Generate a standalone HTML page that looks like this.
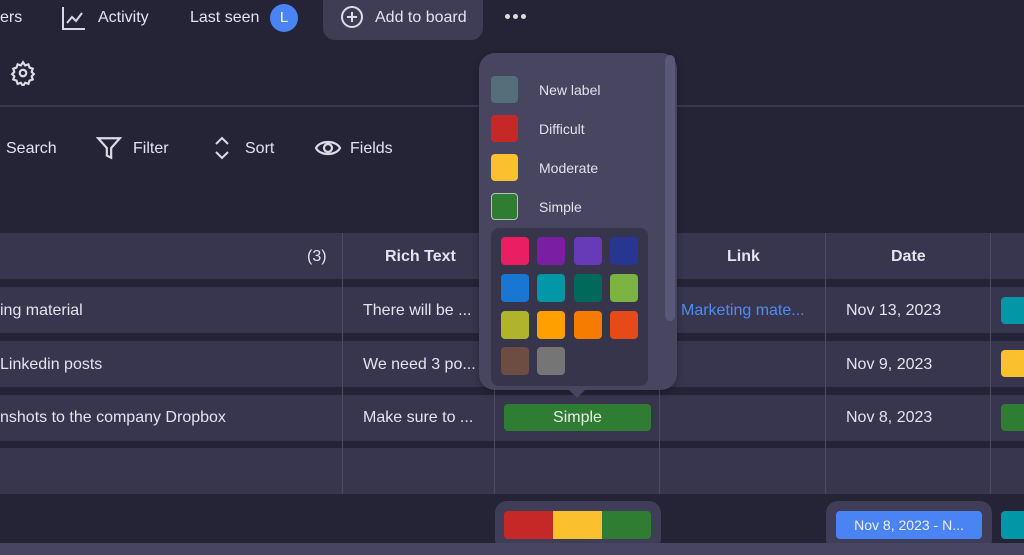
<!DOCTYPE html>
<html><head><style>
*{margin:0;padding:0;box-sizing:border-box}
body{width:1024px;height:555px;overflow:hidden;background:#252437;font-family:"Liberation Sans",sans-serif;color:#e4e3ee;position:relative}
.a{position:absolute}
.t{font-size:16px;color:#e4e3ee;white-space:nowrap}
.row{position:absolute;left:0;width:1024px;background:#38364f}
.vl{position:absolute;width:1px;background:#4c4a66}
.sq{position:absolute;width:28px;height:28px;border-radius:4px}
.ls{position:absolute;left:12px;width:27px;height:27px;border-radius:4px}
.ll{position:absolute;left:60px;font-size:14px;color:#e2e1ec}
.dot{position:absolute;top:14px;width:5px;height:5px;border-radius:50%;background:#ddd}
</style></head><body>
<!-- top bar -->
<div class="a t" style="left:0;top:9px">ers</div>
<svg class="a" style="left:61px;top:5px" width="26" height="26" viewBox="0 0 26 26" fill="none" stroke="#d8d7e4" stroke-width="2"><path d="M2 2v22h22"/><path d="M6 18l5-6 4 4 6-8"/></svg>
<div class="a t" style="left:98px;top:9px">Activity</div>
<div class="a t" style="left:190px;top:9px">Last seen</div>
<div class="a" style="left:270px;top:4px;width:28px;height:28px;border-radius:50%;background:#4a84f4;color:#fff;font-size:15px;text-align:center;line-height:28px">L</div>
<div class="a" style="left:323px;top:-10px;width:160px;height:50px;border-radius:12px;background:#3f3d56"></div>
<svg class="a" style="left:340px;top:5px" width="24" height="24" viewBox="0 0 24 24" fill="none" stroke="#dddce8" stroke-width="2"><circle cx="12" cy="12" r="10"/><path d="M12 7v10M7 12h10"/></svg>
<div class="a t" style="left:375px;top:9px">Add to board</div>
<div class="dot" style="left:505px"></div><div class="dot" style="left:513px"></div><div class="dot" style="left:521px"></div>
<svg class="a" style="left:10px;top:60px" width="26" height="26" viewBox="0 0 24 24" fill="none" stroke="#dcdbe6" stroke-width="2"><circle cx="12" cy="12" r="3"/><path d="M12 2l2 3 3-1 1 3 3 1-1 3 2 2-2 2 1 3-3 1-1 3-3-1-2 3-2-3-3 1-1-3-3-1 1-3-2-2 2-2-1-3 3-1 1-3 3 1z"/></svg>
<div class="a" style="left:0;top:105px;width:1024px;height:2px;background:#3a3850"></div>
<!-- toolbar -->
<div class="a t" style="left:6px;top:140px">Search</div>
<svg class="a" style="left:96px;top:135px" width="26" height="26" viewBox="0 0 24 24" fill="none" stroke="#dcdbe6" stroke-width="2"><path d="M2 3h20l-8 9v9l-4-2v-7z"/></svg>
<div class="a t" style="left:133px;top:140px">Filter</div>
<svg class="a" style="left:211px;top:136px" width="22" height="24" viewBox="0 0 22 24" fill="none" stroke="#dcdbe6" stroke-width="2"><path d="M5 8l6-6 6 6M5 16l6 6 6-6"/></svg>
<div class="a t" style="left:245px;top:140px">Sort</div>
<svg class="a" style="left:314px;top:135px" width="28" height="26" viewBox="0 0 28 26" fill="none" stroke="#dcdbe6" stroke-width="2.2"><path d="M2 13C6 5 22 5 26 13C22 21 6 21 2 13z"/><circle cx="14" cy="13" r="4"/></svg>
<div class="a t" style="left:350px;top:140px">Fields</div>
<!-- table -->
<div class="row" style="top:233px;height:46px"></div>
<div class="row" style="top:287px;height:46px"></div>
<div class="row" style="top:341px;height:46px"></div>
<div class="row" style="top:395px;height:46px"></div>
<div class="row" style="top:448px;height:46px"></div>
<div class="vl" style="left:342px;top:233px;height:261px"></div>
<div class="vl" style="left:494px;top:233px;height:261px"></div>
<div class="vl" style="left:659px;top:233px;height:261px"></div>
<div class="vl" style="left:825px;top:233px;height:261px"></div>
<div class="vl" style="left:990px;top:233px;height:261px"></div>
<div class="a t" style="left:307px;top:248px">(3)</div>
<div class="a t" style="left:385px;top:248px;font-weight:bold">Rich Text</div>
<div class="a t" style="left:727px;top:248px;font-weight:bold">Link</div>
<div class="a t" style="left:891px;top:248px;font-weight:bold">Date</div>
<div class="a t" style="left:0;top:302px">ing material</div>
<div class="a t" style="left:0;top:356px">Linkedin posts</div>
<div class="a t" style="left:0;top:409px">nshots to the company Dropbox</div>
<div class="a t" style="left:363px;top:302px">There will be ...</div>
<div class="a t" style="left:363px;top:356px">We need 3 po...</div>
<div class="a t" style="left:363px;top:409px">Make sure to ...</div>
<div class="a t" style="left:681px;top:302px;color:#4f8cf0">Marketing mate...</div>
<div class="a t" style="left:846px;top:302px">Nov 13, 2023</div>
<div class="a t" style="left:846px;top:356px">Nov 9, 2023</div>
<div class="a t" style="left:846px;top:409px">Nov 8, 2023</div>
<div class="a" style="left:1001px;top:297px;width:30px;height:27px;border-radius:4px;background:#0097a7"></div>
<div class="a" style="left:1001px;top:350px;width:30px;height:27px;border-radius:4px;background:#fbc02d"></div>
<div class="a" style="left:1001px;top:404px;width:30px;height:27px;border-radius:4px;background:#2e7d32"></div>
<div class="a" style="left:504px;top:404px;width:147px;height:27px;border-radius:4px;background:#2e7d32;color:#e8f0e8;font-size:16px;text-align:center;line-height:27px">Simple</div>
<!-- footer -->
<div class="a" style="left:495px;top:501px;width:166px;height:50px;border-radius:12px;background:#3f3d58"></div>
<div class="a" style="left:504px;top:511px;width:147px;height:28px;border-radius:4px;overflow:hidden;display:flex"><div style="flex:1;background:#c62828"></div><div style="flex:1;background:#fbc02d"></div><div style="flex:1;background:#2e7d32"></div></div>
<div class="a" style="left:826px;top:501px;width:166px;height:50px;border-radius:12px;background:#3f3d58"></div>
<div class="a" style="left:836px;top:511px;width:146px;height:28px;border-radius:4px;background:#4a84f4;color:#eef;font-size:14px;text-align:center;line-height:28px">Nov 8, 2023 - N...</div>
<div class="a" style="left:1001px;top:511px;width:30px;height:28px;border-radius:4px;background:#0097a7"></div>
<div class="a" style="left:0;top:543px;width:1024px;height:12px;background:#474561"></div>
<!-- popup -->
<div class="a" style="left:479px;top:53px;width:198px;height:337px;border-radius:16px;background:#47455f;box-shadow:0 2px 8px rgba(0,0,0,.3)">
<div class="a" style="left:186px;top:2px;width:10px;height:266px;border-radius:5px;background:#5a5879"></div>
<div class="ls" style="top:23px;background:#546e7a"></div><div class="ll" style="top:29px">New label</div>
<div class="ls" style="top:62px;background:#c62828"></div><div class="ll" style="top:68px">Difficult</div>
<div class="ls" style="top:101px;background:#fbc02d"></div><div class="ll" style="top:107px">Moderate</div>
<div class="ls" style="top:140px;background:#2e7d32;border:1.5px solid #b8c0b8"></div><div class="ll" style="top:146px">Simple</div>
<div class="a" style="left:12px;top:175px;width:157px;height:158px;border-radius:8px;background:#37354c">
<div class="sq" style="left:10px;top:9px;background:#e91e63"></div><div class="sq" style="left:46px;top:9px;background:#7b1fa2"></div><div class="sq" style="left:83px;top:9px;background:#673ab7"></div><div class="sq" style="left:119px;top:9px;background:#283593"></div>
<div class="sq" style="left:10px;top:46px;background:#1976d2"></div><div class="sq" style="left:46px;top:46px;background:#0097a7"></div><div class="sq" style="left:83px;top:46px;background:#00695c"></div><div class="sq" style="left:119px;top:46px;background:#7cb342"></div>
<div class="sq" style="left:10px;top:83px;background:#afb42b"></div><div class="sq" style="left:46px;top:83px;background:#ffa000"></div><div class="sq" style="left:83px;top:83px;background:#f57c00"></div><div class="sq" style="left:119px;top:83px;background:#e64a19"></div>
<div class="sq" style="left:10px;top:119px;background:#6d4c41"></div><div class="sq" style="left:46px;top:119px;background:#757575"></div>
</div>
</div>
<div class="a" style="left:568px;top:389px;width:0;height:0;border-left:9px solid transparent;border-right:9px solid transparent;border-top:9px solid #47455f"></div>
</body></html>
